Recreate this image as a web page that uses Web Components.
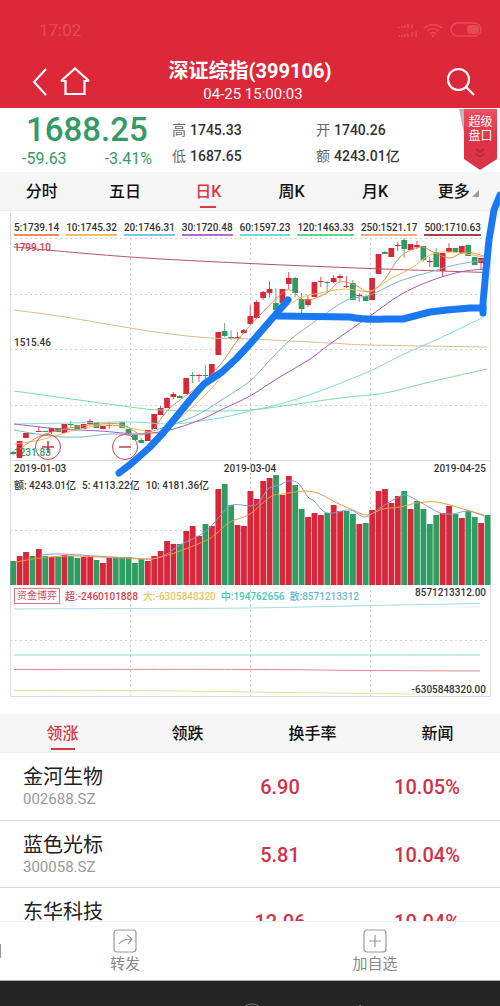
<!DOCTYPE html>
<html lang="zh-CN">
<head>
<meta charset="utf-8">
<meta name="viewport" content="width=device-width, initial-scale=1">
<title>深证综指(399106)</title>
<style>
  body { margin: 0; background: #fff; color: #222; font-family: Roboto, "Noto Sans CJK SC", sans-serif; }
</style>
</head>
<body>
<market-app>
  <index-header slot="top" code="深证综指(399106)" time="04-25 15:00:03"></index-header>
  <quote-panel slot="top"></quote-panel>
  <tab-bar slot="top">
    <tab-item>分时</tab-item><tab-item>五日</tab-item><tab-item active>日K</tab-item><tab-item>周K</tab-item><tab-item>月K</tab-item><tab-item more>更多</tab-item>
  </tab-bar>
  <chart-stack slot="top">
    <price-chart></price-chart>
    <volume-chart></volume-chart>
    <fund-chart></fund-chart>
  </chart-stack>
  <tab-bar slot="top">
    <tab-item active wide>领涨</tab-item><tab-item>领跌</tab-item><tab-item>换手率</tab-item><tab-item>新闻</tab-item>
  </tab-bar>
  <stock-list slot="list"></stock-list>
  <action-bar slot="bottom"></action-bar>
  <nav-strip slot="bottom"></nav-strip>
</market-app>

<script>
const define = (name, html, setup) => customElements.define(name, class extends HTMLElement {
  constructor() {
    super();
    this.attachShadow({ mode: 'open' }).innerHTML = html;
  }
  connectedCallback() { if (setup) setup(this, this.shadowRoot); }
});

/* Smooth SVG path through a flat list of x,y pairs */
const curve = (flat) => {
  const p = [];
  for (let i = 0; i < flat.length; i += 2) p.push([flat[i], flat[i + 1]]);
  let d = `M${p[0]}`;
  for (let i = 0; i < p.length - 1; i++) {
    const a = p[i - 1] || p[i], b = p[i], c = p[i + 1], e = p[i + 2] || c;
    d += `C${b[0] + (c[0] - a[0]) / 6},${b[1] + (c[1] - a[1]) / 6} ${c[0] - (e[0] - b[0]) / 6},${c[1] - (e[1] - b[1]) / 6} ${c[0]},${c[1]}`;
  }
  return d;
};
const line = (color, pts) => `<path d="${curve(pts)}" fill="none" stroke="${color}"/>`;
const RED = '#d7273b', GREEN = '#2f9d62', STEP = 6.41;

const panelCss = `
  :host { display: grid; font-size: 10px; line-height: 14px; font-weight: 500; color: #333; }
  svg, .labels { grid-area: 1 / 1; min-width: 0; }
  svg { width: 100%; display: block; overflow: visible; }
  .grid { stroke: #cfcfcf; stroke-dasharray: 2 3; fill: none; }
  .frame { stroke: #dcdcdc; fill: none; }
`;

define('market-app', `
<style>
  :host { display: flex; flex-direction: column; height: 100vh; overflow: hidden; }
  main { flex: 1; min-height: 0; overflow: hidden; }
</style>
<slot name="top"></slot><main><slot name="list"></slot></main><slot name="bottom"></slot>`);

define('index-header', `
<style>
  :host { display: block; flex: none; height: 108px; background: #dd2839; color: #fff; box-sizing: border-box; padding-top: 20px; }
  .status { display: flex; align-items: center; justify-content: space-between; height: 20px; padding: 0 16px 0 39px; color: #e74b59; font-size: 17px; }
  .bar { display: grid; grid-template-columns: 130px 1fr 130px; align-items: center; margin-top: 19px; }
  .title { text-align: center; }
  h1 { margin: 0; font-size: 20px; line-height: 24px; font-weight: 700; }
  p { margin: 0; font-size: 15px; line-height: 22px; padding-left: 6px; }
  button { border: 0; background: none; padding: 0; color: inherit; display: block; height: 30px; }
  .left { display: flex; gap: 10px; padding-left: 30px; }
  .right { display: flex; justify-content: flex-end; padding-right: 24px; }
  svg { display: block; fill: none; stroke: currentColor; }
</style>
<div class="status"><span>17:02</span>
  <svg width="86" height="18" viewBox="0 0 86 18" aria-hidden="true">
    <path d="M1 7v-1M4 7v-2M7 7v-3M10 7v-4M14 7v-4M1 16v-2M4 16v-2M7 16v-3M10 16v-4M14 16v-5M18 16v-6" stroke-width="1.6"/>
    <path d="M26 7q9-7 18 0M29 10q6-5 12 0M32 13q3-3 6 0" stroke-width="1.6"/><circle cx="35" cy="15" r="1" fill="currentColor"/>
    <rect x="53" y="2" width="30" height="13" rx="6.5" stroke-width="1.4"/><rect x="69" y="4" width="12" height="9" rx="4" fill="currentColor" stroke="none"/>
  </svg>
</div>
<div class="bar">
  <div class="left">
    <button aria-label="返回"><svg width="20" height="30" viewBox="0 0 20 30" stroke-width="2"><path d="M16 2L4 15l12 13"/></svg></button>
    <button aria-label="首页"><svg width="30" height="30" viewBox="0 0 30 30" stroke-width="2.2"><path d="M1 14L15 1.500l14 12.500M1 14h4.500V27h19V14H29"/></svg></button>
  </div>
  <div class="title"><h1></h1><p></p></div>
  <div class="right"><button aria-label="搜索"><svg width="30" height="30" viewBox="0 0 30 30" stroke-width="2.2"><circle cx="12.500" cy="12.500" r="10.500"/><path d="M20 20l8 8"/></svg></button></div>
</div>`, (el, root) => {
  root.querySelector('h1').textContent = el.getAttribute('code');
  root.querySelector('p').textContent = el.getAttribute('time');
});

define('quote-panel', `
<style>
  :host { display: grid; grid-template-columns: 172px 144px 1fr; flex: none; height: 64px; position: relative; background: #fff; isolation: isolate; }
  .now { padding: 2px 20px 0 22px; color: #349b66; }
  .price { font-size: 33px; line-height: 40px; font-weight: 500; padding-left: 4px; }
  .change { display: flex; justify-content: space-between; font-size: 16px; line-height: 18px; }
  dl { margin: 0; padding-top: 9px; }
  dl div { display: flex; gap: 4px; height: 26px; line-height: 26px; font-size: 14px; }
  dt { color: #666; } dd { margin: 0; color: #333; font-weight: 500; }
  button { position: absolute; right: 3px; top: 1px; width: 38px; height: 62px; border: 0; padding: 6px 0 0 5px; background: none; color: #fff; font: 12px/14px Roboto, "Noto Sans CJK SC", sans-serif; display: flex; flex-direction: column; align-items: center; }
  button span { display: block; height: 14px; }
  button svg { position: absolute; inset: 0; z-index: -1; }
</style>
<div class="now"><div class="price">1688.25</div><div class="change"><span>-59.63</span><span>-3.41%</span></div></div>
<dl><div><dt>高</dt><dd>1745.33</dd></div><div><dt>低</dt><dd>1687.65</dd></div></dl>
<dl><div><dt>开</dt><dd>1740.26</dd></div><div><dt>额</dt><dd>4243.01亿</dd></div></dl>
<button>
  <svg width="38" height="62" viewBox="0 0 38 62" aria-hidden="true">
    <defs><linearGradient id="g" x2="0" y2="1"><stop stop-color="#f04f60"/><stop offset=".5" stop-color="#dc3348"/></linearGradient></defs>
    <path d="M0 0h5v24z" fill="#b9b9b9"/><path d="M5 0h33v50L21 61 5 50z" fill="url(#g)"/>
    <path d="M17 40l4 3 4-3M17 45l4 3 4-3" fill="none" stroke="#a92d3e" stroke-width="1.5"/>
  </svg>
  <span>超级</span><span>盘口</span>
</button>`);

define('tab-bar', `
<style>
  :host { display: flex; flex: none; height: 39px; background: #f6f6f6; border-bottom: 1px solid #ececec; box-sizing: border-box; }
  ::slotted(*) { flex: 1; }
</style><slot></slot>`);

define('tab-item', `
<style>
  :host { display: block; }
  button { position: relative; width: 100%; height: 38px; padding: 1px 0 0; border: 0; background: none; color: #111; font: 500 16px/37px Roboto, "Noto Sans CJK SC", sans-serif; }
  :host([active]) button { color: #d83648; }
  :host([active]) button::after { content: ""; position: absolute; left: 50%; bottom: 2px; width: 16px; height: 2px; margin-left: -8px; background: currentColor; }
  :host([active][wide]) button::after { width: 24px; margin-left: -12px; }
  :host([more]) button::after { content: ""; display: inline-block; margin-left: 2px; border-left: 7px solid transparent; border-bottom: 7px solid #999; }
</style><button><slot></slot></button>`);

define('chart-stack', `
<style>
  :host { display: block; flex: none; position: relative; padding-bottom: 17px; background: #fff; }
  svg { position: absolute; left: 0; top: 0; width: 100%; height: 266px; overflow: visible; pointer-events: none; }
</style>
<slot></slot>
<svg viewBox="0 211 500 266" preserveAspectRatio="none" fill="none" stroke="#1879f2" stroke-width="7" stroke-linecap="round" stroke-linejoin="round" aria-hidden="true">
  <path d="M119 473L132 463 150 447 163 433 177 416 190 400 204 384 222 372 236 359 250 344 270 321 288 300"/>
  <path d="M278 316L350 317Q365 320 385 319L403 319 430 312 447 310 470 308 483 308"/>
  <path d="M483 313L483 303 486 270 489 240 494 210 500 195"/>
</svg>`);

define('price-chart', `
<style>${panelCss}
  :host { position: relative; }
  svg { height: 266px; }
  .labels { display: grid; grid-template-rows: 20px 95px 110px 15px 16px; padding: 10px 14px 0; height: 256px; }
  .ma { display: flex; justify-content: space-between; margin-right: 5px; }
  .ma span { border-bottom: 2px solid; border-color: var(--c); height: 13px; }
  .high { color: #d83648; } .low { color: #349b66; }
  .dates { display: flex; justify-content: space-between; line-height: 16px; }
  button { position: absolute; top: 223px; width: 26px; height: 26px; padding: 0; border: 1px solid #c8485a; border-radius: 50%; background: none; margin-left: -13px; z-index: 1; }
  button svg { width: 24px; height: 24px; stroke: #c8384b; stroke-width: 1.5; }
</style>
<div class="labels">
  <div class="ma">
    <span style="--c:#ef8a5c">5:1739.14</span><span style="--c:#f2c063">10:1745.32</span><span style="--c:#76cbe0">20:1746.31</span><span style="--c:#b866cf">30:1720.48</span><span style="--c:#72d9dc">60:1597.23</span><span style="--c:#62d68d">120:1463.33</span><span style="--c:#e9ae86">250:1521.17</span><span style="--c:#a74053">500:1710.63</span>
  </div>
  <div class="high">1799.10</div><div>1515.46</div><div class="low">1231.83</div>
  <div class="dates"><span>2019-01-03</span><span>2019-03-04</span><span>2019-04-25</span></div>
</div>
<svg id="plot" viewBox="0 211 500 266" preserveAspectRatio="none"></svg>
<button style="left:9.6%" aria-label="放大"><svg viewBox="0 0 24 24"><path d="M6 12h12M12 6v12"/></svg></button>
<button style="left:25%" aria-label="缩小"><svg viewBox="0 0 24 24"><path d="M6 12h12"/></svg></button>`,
(el, root) => {
  /* rise/fall flag, body top, body bottom, wick top, wick bottom */
  const candles = [
    'g452 454 451 455','r441 458 441 458','r433 438 433 438','g433 434 433 434','r431 432 426 432','g431 432 431 432','r428 432 428 434','g428 432 428 432','r424 433 424 433','g424 425 421 428',
    'g425 430 425 430','r424 429 424 429','r421 424 419 425','g422 428 422 428','r426 429 426 429','r425 426 422 429','g425 426 425 426','g422 428 422 428','g429 433 429 433','g435 440 435 440',
    'g440 443 438 443','r430 441 430 441','r414 429 414 429','r408 415 406 415','r398 408 397 408','r394 397 392 399','g396 398 395 398','r378 394 378 394','g375 376 372 383','r375 376 374 382',
    'g375 376 365 382','r364 376 364 376','r332 355 332 355','g331 336 323 337','g337 339 330 340','r337 338 332 340','r330 333 329 334','r316 324 305 324','r302 318 300 318','r292 298 291 300',
    'r289 293 281 298','g303 310 288 310','r289 303 289 303','r278 284 272 289','g278 293 277 297','g299 309 293 313','r299 305 295 307','r282 297 282 297','r281 282 277 287','g282 283 281 293',
    'r278 282 275 283','r276 278 274 281','r286 287 276 288','g283 300 280 300','r295 296 293 302','g296 301 296 301','r278 300 278 300','r254 274 254 274','g252 254 251 254','r248 257 248 257',
    'r245 246 242 251','g240 249 238 258','r244 250 244 250','r245 247 241 249','g246 260 246 262','r261 262 257 267','g252 267 248 267','r253 271 253 277','r248 252 243 253','g248 252 248 252',
    'r246 253 246 253','g245 256 245 256','g257 265 257 265','r258 263 258 270'];
  const bodies = candles.map((c, i) => {
    const color = c[0] === 'r' ? RED : GREEN;
    const [t, b, h, l] = c.slice(1).split(' ').map(Number);
    const x = 10.3 + STEP * i;
    return `<path d="M${x + 2.8} ${h}V${l}" stroke="${color}" stroke-width=".8"/><rect x="${x}" y="${t}" width="5.7" height="${b - t}" fill="${color}"/>`;
  }).join('');
  root.getElementById('plot').innerHTML = `
    <path class="grid" d="M10 238.500H491M10 294.500H491M10 349.500H491M10 405.500H491M130.500 238V477M250.500 238V477M370.500 238V477"/>
    <path class="frame" d="M10 460.500H491M10.500 213V477M490.500 213V477"/>
    ${bodies}
    ${line('#b05562', [14,247,130,257,250,263.5,370,268.5,486,272.5])}
    ${line('#ddb98f', [14,310,65,317,130,328,170,334,210,338,250,339,330,343,370,345,487,347])}
    ${line('#7ddba0', [14,391,130,407,160,410,210,411,250,410,290,405,340,398,370,395,390,392,430,382,487,369])}
    ${line('#82dccb', [14,424,70,423,130,422,170,424,200,421,225,417,250,411,280,404,320,391,370,371,400,356,440,338,484,317])}
    ${line('#a45cba', [14,424,60,429,100,431,135,434,150,433,170,430,200,420,225,408,250,396,275,380,310,359,330,344,370,316,400,295,430,281,460,272,484,269])}
    ${line('#7fb5cf', [14,430,50,436,80,437,110,434,140,434,165,427,195,416,220,401,250,381,270,360,290,340,310,325,345,301,370,295,400,281,430,272,455,265,484,260])}
    ${line('#f1ba58', [14,444,40,440,80,429,110,425,140,430,160,433,180,418,210,390,240,353,260,330,280,312,300,298,320,293,345,289,370,291,390,279,410,269,430,255,450,252,484,257])}
    ${line('#e78a55', [20,449,40,436,65,429,90,425,120,424,140,434,152,430,170,408,200,385,220,365,240,337,260,315,280,295,290,290,305,300,325,294,340,282,355,285,370,292,385,279,400,257,420,247,435,253,450,258,465,252,484,256])}`;
});

define('volume-chart', `
<style>${panelCss}
  svg { height: 108px; }
  .labels { display: flex; gap: 6px; padding: 2px 14px; }
</style>
<div class="labels"><span>额: 4243.01亿</span><span>5: 4113.22亿</span><span>10: 4181.36亿</span></div>
<svg viewBox="0 477 500 108" preserveAspectRatio="none"></svg>`,
(el, root) => {
  const tops = 'g561 r556 r552 g556 r549 g556 r557 g557 r555 g556 g558 r557 r557 g560 r563 r558 g557 g557 g557 g563 g559 r561 r556 r551 r541 r544 g544 r531 r526 r536 g524 r526 r489 g484 g505 r525 r526 r491 r499 r481 r478 g475 r495 r476 g485 g509 r517 r513 r515 g513 r505 r511 g511 g514 r524 g523 r510 r491 r489 r503 r496 g491 r509 g501 g509 g524 g515 r513 r506 g514 r518 g511 g517 r523 g515'.split(' ');
  root.querySelector('svg').innerHTML = `
    <path class="grid" d="M10 530.500H491M130.500 477V585M250.500 477V585M370.500 477V585"/>
    <path class="frame" d="M10.500 477V585M490.500 477V585"/>
    ${tops.map((t, i) => `<rect x="${10.3 + STEP * i}" y="${t.slice(1)}" width="5.8" height="${585 - t.slice(1)}" fill="${t[0] === 'r' ? RED : GREEN}"/>`).join('')}
    ${line('#8d97cf', [40,555,60,554,95,556,130,558,150,559,165,555,180,545,205,532,220,516,232,505,256,505,268,489,280,485,288,481,298,483,308,497,314,501,327,513,350,510,365,517,380,508,393,500,405,495,420,502,440,513,453,514,468,511,484,516])}
    ${line('#ec9a42', [16,562,40,558,67,556,100,557,143,559,157,558,180,551,207,540,217,533,230,522,250,514,270,497,283,494,305,491,320,494,337,503,353,510,367,515,383,509,400,507,417,503,437,502,463,509,484,515])}`;
});

define('fund-chart', `
<style>${panelCss}
  svg { height: 112px; }
  .labels { display: flex; flex-direction: column; justify-content: space-between; padding: 1px 14px 0; }
  .top { display: flex; gap: 5px; align-items: flex-start; line-height: 22px; }
  .tag { border: 1px solid #dc7581; padding: 0 2px; line-height: 14px; color: #d05060; font-weight: 400; margin-top: 2px; }
  .max { margin-left: auto; line-height: 14px; } .min { text-align: right; }
</style>
<div class="labels">
  <div class="top"><span class="tag">资金博弈</span><span style="color:#d2434f">超:-2460101888</span><span style="color:#e5c75f">大:-6305848320</span><span style="color:#43c8ba">中:194762656</span><span style="color:#6db7cf">散:8571213312</span><span class="max">8571213312.00</span></div>
  <div class="min">-6305848320.00</div>
</div>
<svg viewBox="0 585 500 112" preserveAspectRatio="none"></svg>`,
(el, root) => {
  root.querySelector('svg').innerHTML = `
    <path class="grid" d="M10 640.500H491M130.500 585V696M250.500 585V696M370.500 585V696"/>
    <path class="frame" d="M10.500 585V696.500H490.500V585"/>
    ${line('#a4dbe9', [14,609,130,608.5,250,608,370,605.5,480,603.5])}
    ${line('#85d9cc', [14,655,480,655])}
    ${line('#df8b90', [14,669.5,250,669.5,370,670.5,480,671])}
    ${line('#eadf9f', [14,690.5,130,690.5,250,692,370,693.5,415,694])}`;
});

define('stock-list', `
<style>
  :host { display: block; }
  table { width: 100%; border-collapse: collapse; table-layout: fixed; }
  tr { border-bottom: 1px solid #d9d9d9; }
  th, td { box-sizing: border-box; height: 67px; padding: 2px 0 0; font-weight: 500; font-size: 20px; color: #cf3347; text-align: center; }
  th { text-align: left; padding-left: 23px; color: #222; font-weight: 400; line-height: 24px; }
  small { display: block; font-size: 15px; line-height: 20px; color: #999; }
  td:last-child { padding-left: 24px; }
</style>
<table>
  <colgroup><col style="width:46%"><col style="width:20%"><col></colgroup>
  <tbody></tbody>
</table>`, (el, root) => {
  root.querySelector('tbody').innerHTML = [
    ['金河生物', '002688.SZ', '6.90', '10.05%'],
    ['蓝色光标', '300058.SZ', '5.81', '10.04%'],
    ['东华科技', '', '12.06', '10.04%']
  ].map(([n, c, p, r]) => `<tr><th scope="row">${n}<small>${c || '&nbsp;'}</small></th><td>${p}</td><td>${r}</td></tr>`).join('');
});

define('action-bar', `
<style>
  :host { display: flex; flex: none; height: 59px; background: #fff; border-top: 1px solid #f0f0f0; box-sizing: border-box; position: relative; }
  button { flex: 1; border: 0; background: none; padding: 7px 0 0; display: flex; flex-direction: column; align-items: center; color: #888; font: 15px/20px "Noto Sans CJK SC", sans-serif; }
  svg { display: block; fill: none; stroke: #999; stroke-width: 1.2; }
  i { position: absolute; left: 0; top: 22px; width: 1px; height: 14px; background: #999; }
</style>
<i></i>
<button><svg width="24" height="24" viewBox="0 0 24 24"><rect x="1" y="1" width="22" height="22" rx="3"/><path d="M6 15q3-5 13-5M14 6l5 4-4 5"/></svg>转发</button>
<button><svg width="24" height="24" viewBox="0 0 24 24"><rect x="1" y="1" width="22" height="22" rx="3"/><path d="M6 12h12M12 6v12"/></svg>加自选</button>`);

define('nav-strip', `
<style>
  :host { display: flex; flex: none; height: 26px; background: #242424; border-top: 1px solid #aaa; box-sizing: border-box; align-items: flex-end; justify-content: center; }
  svg { display: block; }
</style>
<svg width="240" height="3" viewBox="0 0 240 3" fill="none" stroke="#777" aria-hidden="true"><path d="M115 3q7-4 14 0"/><path d="M229 3l2-1"/></svg>`);
</script>
</body>
</html>
